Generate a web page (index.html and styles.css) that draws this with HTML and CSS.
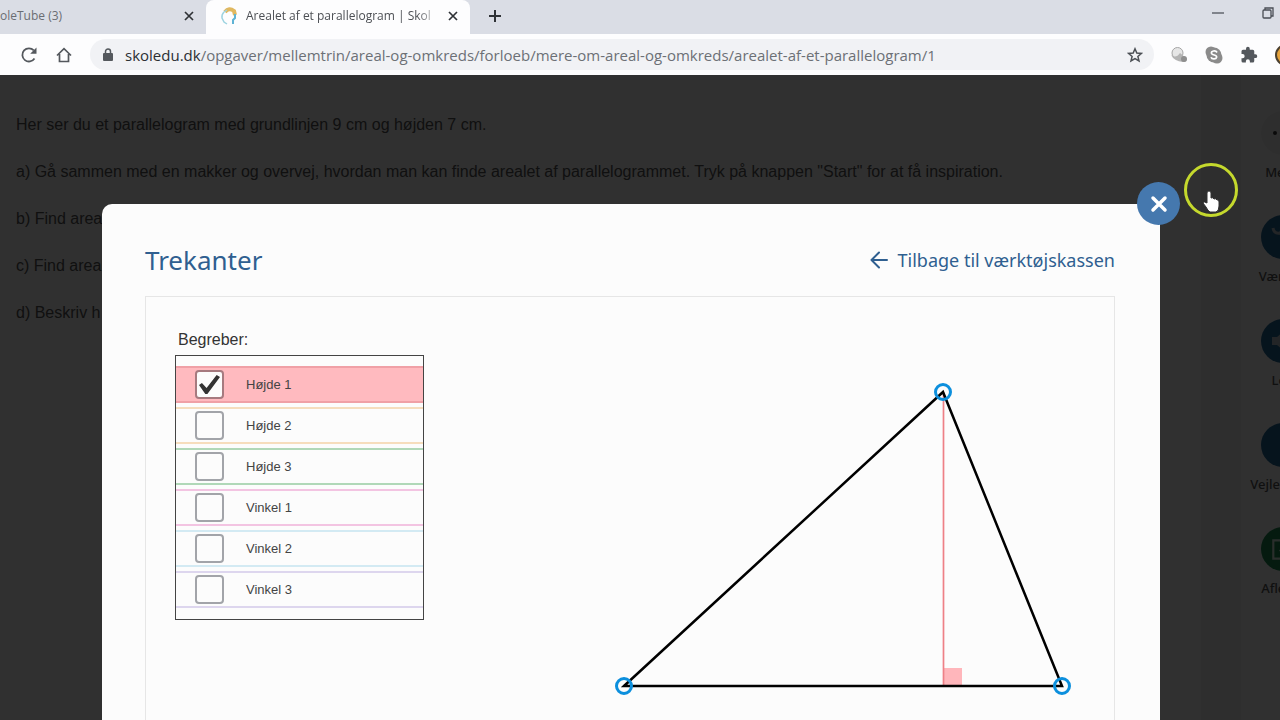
FILE: index.html
```
<!DOCTYPE html>
<html lang="da">
<head>
  <meta charset="UTF-8">
  <title>Arealet af et parallelogram | Skoledu</title>
  <link rel="stylesheet" href="styles.css">
</head>
<body>
  <header class="browser">
    <div class="tabs">
      <div class="tab">
        <span class="tab-title">oleTube (3)</span>
        <button type="button" class="icon-btn" aria-label="Luk fane">
          <svg width="10" height="10" viewBox="0 0 10 10"><path d="M1 1l8 8M9 1l-8 8" stroke="#2f3236" stroke-width="1.700"/></svg>
        </button>
      </div>
      <div class="tab tab-active">
        <svg width="18" height="18" viewBox="0 0 18 18" fill="none">
          <path d="M5 5Q9 0 14 4l1 4" stroke="#e0b860" stroke-width="4"/>
          <path d="M7 3L4 5a7 7 0 0 0-2 6l2 4 3 2" stroke="#9dd3e0" stroke-width="1.500"/>
          <path d="M15 7v4l-2 2v4" stroke="#5fb3d5" stroke-width="2"/>
        </svg>
        <span class="tab-title tab-fade">Arealet af et parallelogram | Skol</span>
        <button type="button" class="icon-btn" aria-label="Luk fane">
          <svg width="10" height="10" viewBox="0 0 10 10"><path d="M1 1l8 8M9 1l-8 8" stroke="#2f3236" stroke-width="1.700"/></svg>
        </button>
      </div>
      <button type="button" class="icon-btn new-tab" aria-label="Ny fane">
        <svg width="14" height="14" viewBox="0 0 14 14"><path d="M7 1v12M1 7h12" stroke="#2f3236" stroke-width="2"/></svg>
      </button>
      <div class="window-controls">
        <button type="button" class="icon-btn" aria-label="Minimer">
          <svg width="12" height="12" viewBox="0 0 12 12"><path d="M0 6h12" stroke="#5a5e66" stroke-width="1.4"/></svg>
        </button>
        <button type="button" class="icon-btn" aria-label="Gendan">
          <svg width="12" height="12" viewBox="0 0 12 12" fill="none" stroke="#4a4e55" stroke-width="1.3"><rect x="1" y="3" width="8" height="8" rx="1"/><path d="M3 3V1h8v8H9"/></svg>
        </button>
      </div>
    </div>

    <div class="toolbar">
      <button type="button" class="icon-btn" aria-label="Genindlæs">
        <svg width="18" height="18" viewBox="0 0 18 18"><path d="M14.5 12.5A6.6 6.6 0 1 1 13.8 4.4" fill="none" stroke="#54585d" stroke-width="1.8"/><path d="M16.5 1.5v6.3h-6.300z" fill="#54585d"/></svg>
      </button>
      <button type="button" class="icon-btn" aria-label="Startside">
        <svg width="16" height="16" viewBox="0 0 16 16"><path d="M1 8.500L8 1.700l7 6.800M3.500 7v7.500h9V7" fill="none" stroke="#54585d" stroke-width="1.7"/></svg>
      </button>
      <div class="address">
        <svg width="10" height="13" viewBox="0 0 10 13"><rect y="5" width="10" height="8" rx="1" fill="#54585d"/><path d="M2.500 6V3.500a2.500 2.500 0 0 1 5 0V6" fill="none" stroke="#54585d" stroke-width="1.5"/></svg>
        <div class="url">skoledu.dk<span>/opgaver/mellemtrin/areal-og-omkreds/forloeb/mere-om-areal-og-omkreds/arealet-af-et-parallelogram/1</span></div>
        <button type="button" class="icon-btn" aria-label="Bogmærk">
          <svg width="16" height="16" viewBox="0 0 16 16"><path d="M8 1.800l1.800 4.200 4.600.4-3.500 3 1.100 4.500L8 11.500l-4 2.400 1.100-4.500-3.500-3L6.200 6z" fill="none" stroke="#4c5055" stroke-width="1.500"/></svg>
        </button>
      </div>
      <div class="extensions">
        <button type="button" class="icon-btn" aria-label="Skærmoptager">
          <svg width="18" height="18" viewBox="0 0 18 18"><circle cx="7.500" cy="7" r="5.500" fill="#e6e6e6" stroke="#a5a5a5"/><path d="M1 9q5 4 9-2l6 5q2 4-3 4-9-1-12-7z" fill="#b4b4b4"/><circle cx="14" cy="13" r="3" fill="#8e8e8e"/></svg>
        </button>
        <button type="button" class="icon-btn" aria-label="Skype">
          <svg width="18" height="18" viewBox="0 0 18 18"><circle cx="6" cy="6" r="5.500" fill="#8b8b8b"/><circle cx="12" cy="12" r="5.500" fill="#8b8b8b"/><circle cx="9" cy="9" r="7.500" fill="#8b8b8b"/><path d="M12 6.500Q11 4.500 8.500 5 6 5.500 6.500 7.300 7 8.500 9.200 9q2.600.6 2.400 2.200-.4 1.800-2.800 1.700-2.200 0-2.800-1.700" fill="none" stroke="#fff" stroke-width="1.700"/></svg>
        </button>
        <button type="button" class="icon-btn" aria-label="Udvidelser">
          <svg width="18" height="18" viewBox="0 0 24 24"><path d="M20.500 11H19V7a2 2 0 0 0-2-2h-4V3.500a2.500 2.500 0 0 0-5 0V5H4a2 2 0 0 0-2 2v3.800h1.500a2.700 2.700 0 0 1 0 5.400H2V20a2 2 0 0 0 2 2h3.800v-1.500a2.700 2.700 0 0 1 5.400 0V22H17a2 2 0 0 0 2-2v-4h1.500a2.500 2.500 0 0 0 0-5z" fill="#54585d"/></svg>
        </button>
        <button type="button" class="avatar" aria-label="Profil"></button>
      </div>
    </div>
  </header>

  <div class="page">
    <main class="task">
      <p>Her ser du et parallelogram med grundlinjen 9 cm og højden 7 cm.</p>
      <p>a) Gå sammen med en makker og overvej, hvordan man kan finde arealet af parallelogrammet. Tryk på knappen "Start" for at få inspiration.</p>
      <p>b) Find areal</p>
      <p>c) Find areal</p>
      <p>d) Beskriv h</p>
    </main>

    <nav class="tools">
      <a href="#" class="tool">
        <span class="tool-icon tool-plain"><svg width="24" height="24" viewBox="0 0 24 24" fill="#333"><circle cx="4" cy="12" r="2"/><circle cx="12" cy="12" r="2"/><circle cx="20" cy="12" r="2"/></svg></span>
        Menu
      </a>
      <a href="#" class="tool">
        <span class="tool-icon"><svg width="26" height="26" viewBox="0 0 26 26" fill="none" stroke="#b8c4cc" stroke-width="3"><path d="M3 4q1 6 7 5l10 12M10 9q3-3 1-6"/></svg></span>
        Værktøj
      </a>
      <a href="#" class="tool">
        <span class="tool-icon"><svg width="26" height="26" viewBox="0 0 26 26" fill="#b8c4cc"><path d="M2 9h5l7-6v20l-7-6H2z"/></svg></span>
        Log
      </a>
      <a href="#" class="tool">
        <span class="tool-icon"></span>
        Vejledning
      </a>
      <a href="#" class="tool">
        <span class="tool-icon tool-green"><svg width="28" height="28" viewBox="0 0 26 26" fill="none" stroke="#e0f4e8" stroke-width="2"><path d="M11 5H4v17h17v-7M10 15L21 4M14 4h7v7"/></svg></span>
        Aflever
      </a>
    </nav>

    <div class="overlay">
      <section class="modal" role="dialog" aria-labelledby="modalTitle">
        <button type="button" class="close" aria-label="Luk">
          <svg width="18" height="18" viewBox="0 0 18 18"><path d="M3 3l12 12M15 3L3 15" stroke="#fff" stroke-width="3.500" stroke-linecap="round"/></svg>
        </button>
        <div class="modal-header">
          <h2 id="modalTitle">Trekanter</h2>
          <a href="#" class="back">
            <svg width="18" height="18" viewBox="0 0 18 18"><path d="M17 9H2M9 1.500L1.500 9 9 16.500" fill="none" stroke="#2f5f90" stroke-width="2" stroke-linecap="round" stroke-linejoin="round"/></svg>
            Tilbage til værktøjskassen
          </a>
        </div>

        <div class="figure">
          <form class="concepts">
            <div class="concepts-title">Begreber:</div>
            <div class="concepts-list">
              <label class="concept red"><input type="checkbox" checked>Højde 1</label>
              <label class="concept orange"><input type="checkbox">Højde 2</label>
              <label class="concept green"><input type="checkbox">Højde 3</label>
              <label class="concept pink"><input type="checkbox">Vinkel 1</label>
              <label class="concept cyan"><input type="checkbox">Vinkel 2</label>
              <label class="concept purple"><input type="checkbox">Vinkel 3</label>
            </div>
          </form>

          <svg class="triangle" width="465" height="322" viewBox="0 0 465 322" fill="none">
            <rect x="334" y="290" width="18" height="18" fill="#ffb6bb"/>
            <path d="M333.500 14v294" stroke="#ee8087" stroke-width="1.700"/>
            <path d="M14 308L333 14l119 294z" stroke="#000" stroke-width="2.500"/>
            <g stroke="#0c8fdd" stroke-width="3">
              <circle cx="333" cy="14" r="7.500"/>
              <circle cx="14" cy="308" r="7.500"/>
              <circle cx="452" cy="308" r="7.500"/>
            </g>
          </svg>
        </div>
      </section>
    </div>

    <div class="pointer">
      <svg width="18" height="24" viewBox="0 0 18 24"><path d="M5 13V3q0-2 2-2t2 2v5q2-1 3 1 2-1 3 1 2-1 2 2v4q0 5-3 6H8q-2-1-4-5l-3-4q1-2 4 0z" fill="#fff" stroke="#333"/></svg>
    </div>
  </div>
</body>
</html>
```
FILE: styles.css
```
* {
  box-sizing: border-box;
}

body {
  margin: 0;
  height: 100vh;
  display: flex;
  flex-direction: column;
  overflow: hidden;
  font-family: "Liberation Sans", Arial, sans-serif;
}

svg {
  flex: none;
}

.icon-btn {
  display: flex;
  padding: 0;
  border: 0;
  background: none;
  cursor: pointer;
}

/* browser */
.browser {
  font-family: "Open Sans", "Segoe UI", sans-serif;
  background-color: #fdfdfe;
}

.tabs {
  display: flex;
  align-items: center;
  height: 34px;
  background-color: #dadde5;
}

.tab {
  display: flex;
  align-items: center;
  width: 206px;
  height: 34px;
  padding: 0 12px 3px 0;
  font-size: 12px;
  color: #6a6d73;
}

.tab-title {
  flex: 1;
  overflow: hidden;
  white-space: nowrap;
}

.tab-active {
  width: 264px;
  gap: 8px;
  padding-left: 14px;
  border-radius: 8px 8px 0 0;
  background-color: #fdfdfe;
  color: #4c4f54;
}

.tab-fade {
  -webkit-mask-image: linear-gradient(to right, #000 88%, transparent);
  mask-image: linear-gradient(to right, #000 88%, transparent);
}

.new-tab {
  margin-left: 18px;
  padding-bottom: 3px;
}

.window-controls {
  display: flex;
  gap: 38px;
  margin-left: auto;
  padding: 0 6px 8px 0;
}

.toolbar {
  display: flex;
  align-items: center;
  gap: 18px;
  height: 41px;
  padding-left: 20px;
}

.address {
  flex: 1;
  display: flex;
  align-items: center;
  gap: 12px;
  height: 31px;
  padding: 0 11px 0 13px;
  border-radius: 16px;
  background-color: #f1f2f5;
}

.url {
  flex: 1;
  overflow: hidden;
  white-space: nowrap;
  font-size: 15px;
  color: #2c2f33;
}

.url span {
  color: #6c7076;
}

.extensions {
  display: flex;
  align-items: center;
  gap: 17px;
  margin: 0 -17px 0 -2px;
}

.avatar {
  width: 22px;
  height: 22px;
  padding: 0;
  border: 2px solid #4b4030;
  border-radius: 50%;
  background-color: #e6a33c;
}

/* page behind the dialog */
.page {
  position: relative;
  flex: 1;
  display: flex;
  min-height: 0;
  overflow: hidden;
  background-color: #f2f2f2;
}

.task {
  flex: 1;
  margin-right: 40px;
  padding: 38px 16px;
  background-color: #fff;
  font-size: 16px;
  line-height: 23px;
  color: #555;
}

.task p {
  margin: 0 0 24px;
}

.tools {
  flex: none;
  width: 84px;
  margin-right: -45px;
  padding-top: 36px;
  display: flex;
  flex-direction: column;
  gap: 32px;
  background-color: #fff;
}

.tool {
  display: flex;
  flex-direction: column;
  align-items: center;
  gap: 6px;
  font-family: "Noto Sans", sans-serif;
  font-size: 13px;
  font-weight: 500;
  line-height: 22px;
  color: #555;
  text-decoration: none;
}

.tool-icon {
  display: flex;
  align-items: center;
  justify-content: center;
  width: 44px;
  height: 44px;
  border-radius: 50%;
  background-color: #246a99;
}

.tool-plain {
  background-color: #f4f4f4;
}

.tool-green {
  background-color: #1b8a50;
}

/* dialog */
.overlay {
  position: absolute;
  inset: 0;
  padding: 129px 120px 0 102px;
  background-color: rgba(0, 0, 0, 0.81);
}

.modal {
  position: relative;
  min-height: 100%;
  padding: 0 45px 44px 43px;
  border-radius: 10px;
  background-color: #fcfcfc;
}

.close {
  position: absolute;
  top: -22px;
  right: -20px;
  display: flex;
  align-items: center;
  justify-content: center;
  width: 43px;
  height: 43px;
  padding: 0;
  border: 0;
  border-radius: 50%;
  background-color: #4578ae;
  cursor: pointer;
}

.modal-header {
  display: flex;
  align-items: center;
  justify-content: space-between;
  height: 92px;
  padding-top: 20px;
  font-family: "Noto Sans", sans-serif;
  color: #2f5f90;
}

.modal-header h2 {
  margin: 0;
  font-size: 26px;
  font-weight: 400;
}

.back {
  display: flex;
  align-items: center;
  gap: 10px;
  font-size: 18px;
  font-weight: 400;
  color: #2f5f90;
  text-decoration: none;
}

.figure {
  display: flex;
  justify-content: space-between;
  min-height: 480px;
  padding: 31px 39px 0 29px;
  border: 1px solid #e6e6e6;
}

.concepts {
  width: 249px;
}

.concepts-title {
  padding: 0 3px 3px;
  font-size: 16px;
  line-height: 24px;
  color: #333;
}

.concepts-list {
  display: flex;
  flex-direction: column;
  gap: 4px;
  padding: 10px 0 11px;
  border: 1px solid #444;
}

.concept {
  display: flex;
  align-items: center;
  gap: 22px;
  height: 37px;
  padding-left: 19px;
  border-top: 2px solid;
  border-bottom: 2px solid;
  font-size: 13px;
  color: #444;
}

.concept input {
  appearance: none;
  display: flex;
  align-items: center;
  justify-content: center;
  width: 29px;
  height: 29px;
  margin: 0;
  border: 2px solid #a2a4a9;
  border-radius: 4px;
  background-color: #fcfcfc;
}

.concept input:checked {
  border-color: #a67a7f;
}

.concept input:checked::before {
  content: "";
  width: 21px;
  height: 20px;
  background-color: #333;
  clip-path: polygon(0 52%, 14% 42%, 36% 68%, 84% 2%, 100% 12%, 40% 98%, 30% 98%);
}

.red {
  border-color: #f0a0a6;
  background-color: #ffbabf;
}

.orange {
  border-color: #f6ddbd;
}

.green {
  border-color: #b0d8b8;
}

.pink {
  border-color: #f3c4e2;
}

.cyan {
  border-color: #d3eaf3;
}

.purple {
  border-color: #ddd6ee;
}

.triangle {
  margin-top: 50px;
}

/* mouse pointer with highlight ring */
.pointer {
  position: absolute;
  top: 88px;
  right: 42px;
  display: flex;
  justify-content: center;
  align-items: flex-end;
  width: 54px;
  height: 54px;
  border: 3px solid #c5d92d;
  border-radius: 50%;
}
```
